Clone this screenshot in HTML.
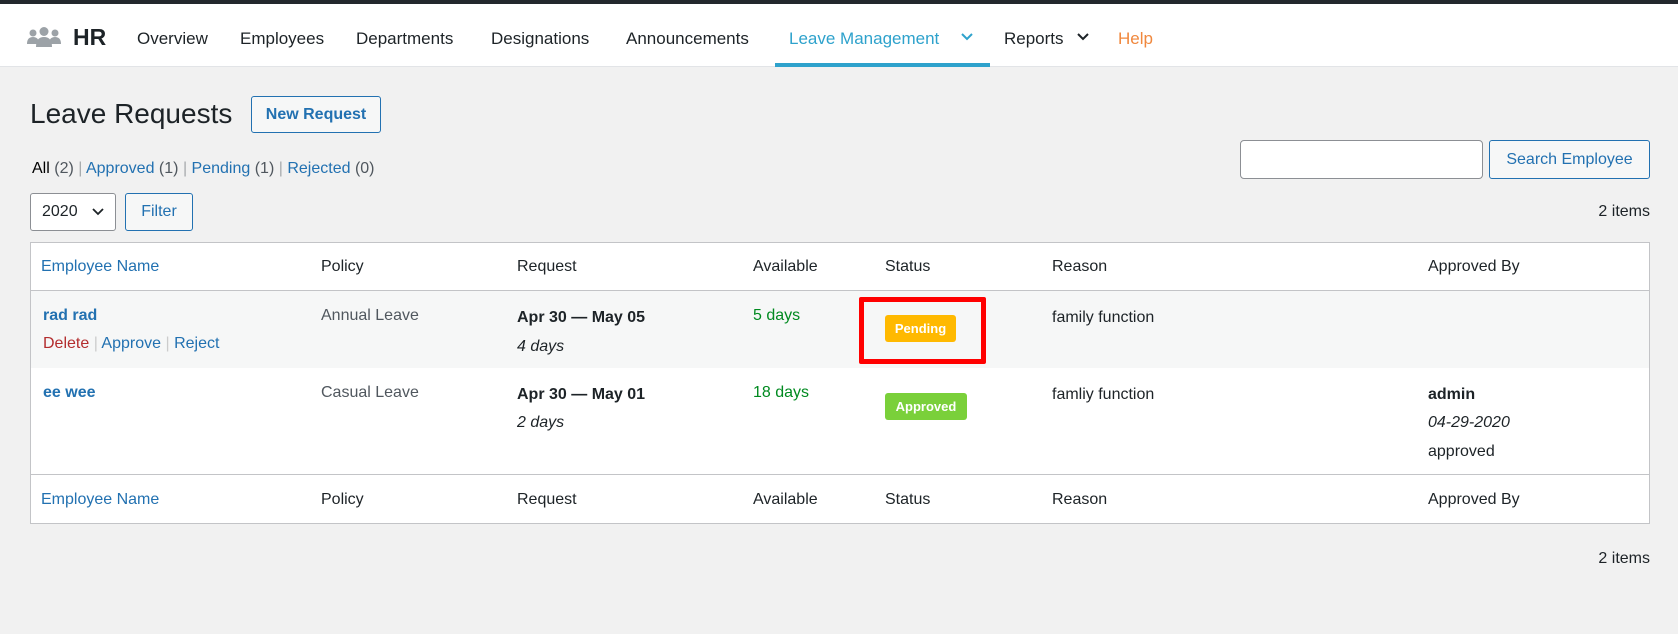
<!DOCTYPE html>
<html><head><meta charset="utf-8"><style>
*{box-sizing:border-box;margin:0;padding:0}
body{width:1678px;height:634px;background:#f1f1f1;font-family:"Liberation Sans",sans-serif;color:#1d2327;position:relative;overflow:hidden}
.a{position:absolute;white-space:nowrap}
.top{position:absolute;left:0;top:0;width:1678px;height:4px;background:#23282d}
.nav{position:absolute;left:0;top:4px;width:1678px;height:63px;background:#fff;border-bottom:1px solid #e2e4e7}
.nv{font-size:17px;top:25px;color:#1d2327}
.blue{color:#2271b1}
.btn{position:absolute;border:1px solid #2271b1;border-radius:3px;background:#f6f7f7;color:#2271b1;font-size:16px;display:flex;align-items:center;justify-content:center}
.t{font-size:16px}
.g{color:#50575e}
</style></head><body>
<div class="top"></div>
<div class="nav">
 <svg class="a" style="left:27px;top:23px" width="34" height="20" viewBox="0 0 34 20" fill="#9ca2a7"><circle cx="6" cy="6" r="3.5"/><circle cx="28" cy="6" r="3.5"/><circle cx="17" cy="4.5" r="4.5"/><path d="M0 17q0-7 6-7t6 7z M22 17q0-7 6-7t6 7z M9 20q0-10 8-10t8 10z"/></svg>
 <div class="a" style="left:73px;top:20px;font-size:23px;font-weight:bold">HR</div>
 <div class="a nv" style="left:137px">Overview</div>
 <div class="a nv" style="left:240px">Employees</div>
 <div class="a nv" style="left:356px">Departments</div>
 <div class="a nv" style="left:491px">Designations</div>
 <div class="a nv" style="left:626px">Announcements</div>
 <div class="a nv" style="left:789px;color:#2ea2cc">Leave Management</div>
 <svg class="a" style="left:961px;top:29px" width="12" height="8"><path d="M1 1l5 5 5-5" stroke="#2ea2cc" stroke-width="2" fill="none"/></svg>
 <div class="a" style="left:775px;top:59px;width:215px;height:4px;background:#2ea2cc"></div>
 <div class="a nv" style="left:1004px">Reports</div>
 <svg class="a" style="left:1077px;top:29px" width="12" height="8"><path d="M1 1l5 5 5-5" stroke="#1d2327" stroke-width="2" fill="none"/></svg>
 <div class="a nv" style="left:1118px;color:#f0883e">Help</div>
</div>
<div class="a" style="left:30px;top:98px;font-size:28px;color:#1d2327">Leave Requests</div>
<div class="btn" style="left:251px;top:96px;width:130px;height:37px;font-weight:bold">New Request</div>
<div class="a t" style="left:32px;top:160px"><span style="color:#000">All</span> <span class="g">(2)</span> <span style="color:#a7aaad">|</span> <span class="blue">Approved</span> <span class="g">(1)</span> <span style="color:#a7aaad">|</span> <span class="blue">Pending</span> <span class="g">(1)</span> <span style="color:#a7aaad">|</span> <span class="blue">Rejected</span> <span class="g">(0)</span></div>
<div class="a" style="left:1240px;top:140px;width:243px;height:39px;background:#fff;border:1px solid #8c8f94;border-radius:4px"></div>
<div class="btn" style="left:1489px;top:140px;width:161px;height:39px">Search Employee</div>
<div class="a" style="left:30px;top:193px;width:86px;height:38px;background:#fff;border:1px solid #8c8f94;border-radius:3px"></div>
<div class="a t" style="left:42px;top:203px">2020</div>
<svg class="a" style="left:92px;top:208px" width="12" height="8"><path d="M1 1l5 5 5-5" stroke="#1d2327" stroke-width="1.8" fill="none"/></svg>
<div class="btn" style="left:125px;top:193px;width:68px;height:38px">Filter</div>
<div class="a t" style="right:28px;top:203px">2 items</div>
<div class="a" style="left:30px;top:242px;width:1620px;height:282px;background:#fff;border:1px solid #c3c4c7"></div>
<div class="a" style="left:31px;top:290px;width:1618px;height:78px;background:#f6f7f7;border-top:1px solid #c3c4c7"></div>
<div class="a" style="left:31px;top:474px;width:1618px;height:1px;background:#c3c4c7"></div>
<div class="a t" style="left:41px;top:258px;color:#2271b1">Employee Name</div>
<div class="a t" style="left:321px;top:258px">Policy</div>
<div class="a t" style="left:517px;top:258px">Request</div>
<div class="a t" style="left:753px;top:258px">Available</div>
<div class="a t" style="left:885px;top:258px">Status</div>
<div class="a t" style="left:1052px;top:258px">Reason</div>
<div class="a t" style="left:1428px;top:258px">Approved By</div>
<div class="a t" style="left:43px;top:307px;color:#2271b1;font-weight:bold">rad rad</div>
<div class="a t" style="left:43px;top:335px"><span style="color:#b32d2e">Delete</span><span style="color:#ccc"> | </span><span class="blue">Approve</span><span style="color:#ccc"> | </span><span class="blue">Reject</span></div>
<div class="a t g" style="left:321px;top:307px">Annual Leave</div>
<div class="a t" style="left:517px;top:309px;font-weight:bold">Apr 30 — May 05</div>
<div class="a t" style="left:517px;top:338px;font-style:italic">4 days</div>
<div class="a t" style="left:753px;top:307px;color:#008a20">5 days</div>
<div class="a" style="left:859px;top:297px;width:127px;height:67px;border:5px solid #f00;border-radius:2px"></div>
<div class="a" style="left:885px;top:315px;width:71px;height:27px;background:#ffb900;border-radius:3px;color:#fff;font-size:13px;font-weight:bold;display:flex;align-items:center;justify-content:center">Pending</div>
<div class="a t" style="left:1052px;top:309px">family function</div>
<div class="a t" style="left:43px;top:384px;color:#2271b1;font-weight:bold">ee wee</div>
<div class="a t g" style="left:321px;top:384px">Casual Leave</div>
<div class="a t" style="left:517px;top:386px;font-weight:bold">Apr 30 — May 01</div>
<div class="a t" style="left:517px;top:414px;font-style:italic">2 days</div>
<div class="a t" style="left:753px;top:384px;color:#008a20">18 days</div>
<div class="a" style="left:885px;top:393px;width:82px;height:27px;background:#7ad03a;border-radius:3px;color:#fff;font-size:13px;font-weight:bold;display:flex;align-items:center;justify-content:center">Approved</div>
<div class="a t" style="left:1052px;top:386px">famliy function</div>
<div class="a t" style="left:1428px;top:386px;font-weight:bold">admin</div>
<div class="a t" style="left:1428px;top:414px;font-style:italic">04-29-2020</div>
<div class="a t" style="left:1428px;top:443px">approved</div>
<div class="a t" style="left:41px;top:491px;color:#2271b1">Employee Name</div>
<div class="a t" style="left:321px;top:491px">Policy</div>
<div class="a t" style="left:517px;top:491px">Request</div>
<div class="a t" style="left:753px;top:491px">Available</div>
<div class="a t" style="left:885px;top:491px">Status</div>
<div class="a t" style="left:1052px;top:491px">Reason</div>
<div class="a t" style="left:1428px;top:491px">Approved By</div>
<div class="a t" style="right:28px;top:550px">2 items</div>
</body></html>
